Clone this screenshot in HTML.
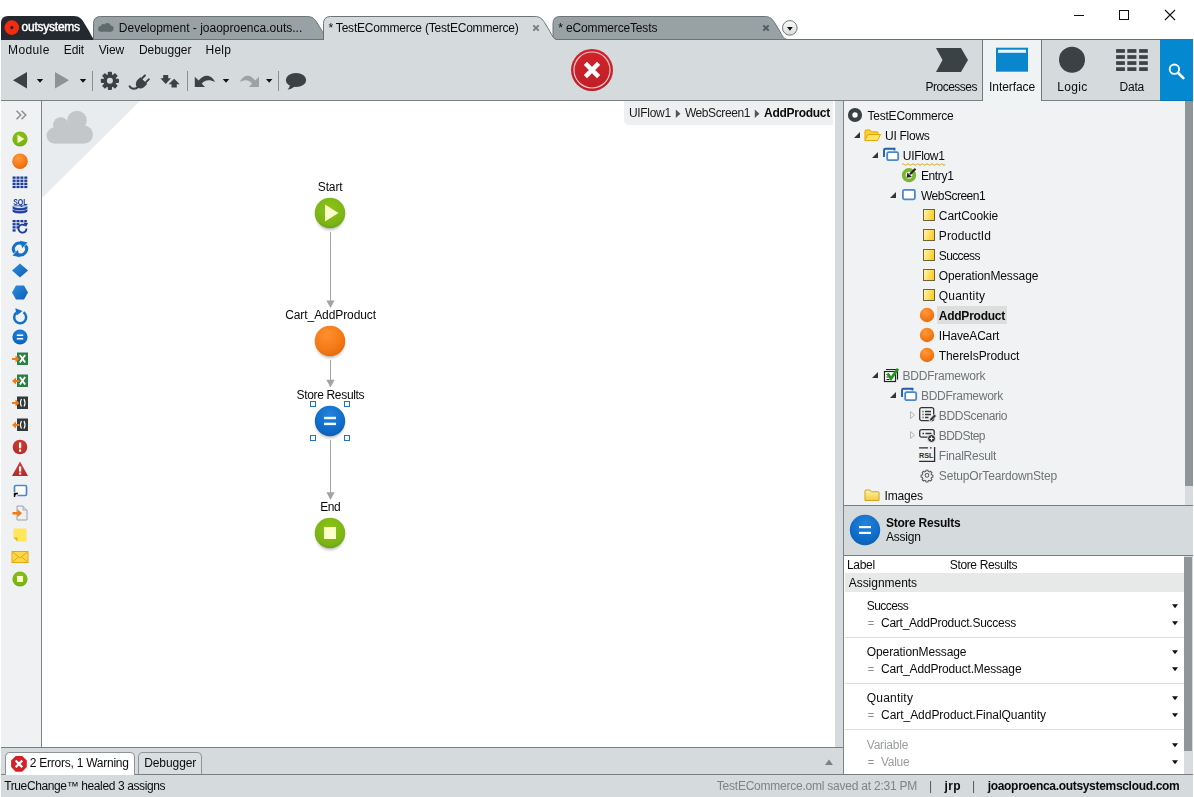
<!DOCTYPE html>
<html><head><meta charset="utf-8"><title>Service Studio</title>
<style>
html,body{margin:0;padding:0;background:#fff;}
#app{position:relative;width:1194px;height:797px;overflow:hidden;background:#fff;font-family:"Liberation Sans",sans-serif;font-size:12px;}
#app div,#app svg{position:absolute;}
.t{position:absolute;white-space:pre;line-height:16px;font-size:12px;}

</style></head>
<body>
<div id="app">
<!-- main chrome background -->
<div style="left:1px;top:40px;width:1192px;height:60px;background:#d5dadd;"></div>
<div style="left:1px;top:100px;width:1192px;height:1px;background:#7b8184;"></div>
<div style="left:1px;top:101px;width:1192px;height:696px;background:#d5dadd;"></div>
<!-- top tab strip -->
<svg style="left:0;top:0" width="1194" height="41" viewBox="0 0 1194 41">
  <defs><linearGradient id="ddg" x1="0" y1="0" x2="0" y2="1"><stop offset="0" stop-color="#fafafa"/><stop offset="1" stop-color="#d9dbdc"/></linearGradient></defs>
  <rect x="1" y="39" width="1192" height="1" fill="#676d70"/><rect x="1160" y="39" width="33" height="1" fill="#3f6f8d"/>
  <!-- tab 1 dark -->
  <path d="M1 40 V23 Q1 16 8 16 H73.700 C79.700 16 81.700 19 84 22.700 L89.300 31.400 C91.700 36 93 40 97 40 Z" fill="#23292e"/>
  <!-- tab 2 -->
  <path d="M93.5 39.5 V23.500 Q93.5 16.500 100.5 16.500 H306.7 C312.7 16.500 314.7 19 317.0 22.700 L322.3 31.400 C324.7 36 326.2 39.5 330.7 39.5 Z" fill="#98a2a5" stroke="#6b7376" stroke-width="1"/>
  <!-- tab 4 -->
  <path d="M553 39.5 V23.500 Q553 16.500 560 16.500 H764.3 C770.3 16.500 772.3 19 774.5999999999999 22.700 L779.9 31.400 C782.3 36 783.8 39.5 788.3 39.5 Z" fill="#98a2a5" stroke="#6b7376" stroke-width="1"/>
  <!-- tab 3 active -->
  <path d="M323.5 41 V23.500 Q323.5 16.500 330.5 16.500 H534.3 C540.3 16.500 542.3 19 544.6 22.700 L549.9 31.400 C552.3 36 553.8 40 558.3 40.2 V41 Z" fill="#d5dadd"/>
  <path d="M323.5 40 V23.500 Q323.5 16.500 330.5 16.500 H534.3 C540.3 16.500 542.3 19 544.6 22.700 L549.9 31.400 C552.3 36 553.8 39.500 557.5 39.500" fill="none" stroke="#6b7376" stroke-width="1"/>
  <!-- outsystems logo -->
  <circle cx="11.800" cy="27.600" r="4.500" fill="none" stroke="#f52b10" stroke-width="5.600"/>
  <!-- cloud in tab2 -->
  <g fill="#5f6b6c"><circle cx="101" cy="28.800" r="2.900"/><circle cx="103.200" cy="26.300" r="2.300"/><circle cx="107.400" cy="26" r="3.100"/><circle cx="110.500" cy="28.600" r="3.100"/><rect x="101" y="26.500" width="9.500" height="5.200"/></g>
  <!-- close x -->
  <path d="M533.300 25.300 l5.400 5.400 m0 -5.400 l-5.400 5.400" stroke="#777c7f" stroke-width="1.900" fill="none"/>
  <path d="M763.300 25.300 l5.400 5.400 m0 -5.400 l-5.400 5.400" stroke="#4f5a5e" stroke-width="1.900" fill="none"/>
  <!-- dropdown circle -->
  <circle cx="789.800" cy="27.900" r="7.300" fill="url(#ddg)" stroke="#6f7679" stroke-width="1"/>
  <path d="M787 27 h5.800 l-2.900 3.700z" fill="#111"/>
  <!-- window controls -->
  <rect x="1074" y="15" width="10" height="1" fill="#111"/>
  <rect x="1119.500" y="10.500" width="9" height="9" fill="none" stroke="#111" stroke-width="1"/>
  <path d="M1165 10 l10 10 m0 -10 l-10 10" stroke="#111" stroke-width="1.100" fill="none"/>
</svg>
<!-- toolbar icons -->
<svg style="left:0;top:60px" width="320" height="40" viewBox="0 60 320 40">
  <path d="M27 72 v16.500 l-14 -8.250z" fill="#3b4144"/>
  <path d="M36.800 78.900 h6.400 l-3.200 3.900z" fill="#111"/>
  <path d="M55 72 v16.500 l14 -8.250z" fill="#8d9295"/>
  <path d="M79.800 78.900 h6.400 l-3.200 3.900z" fill="#111"/>
  <rect x="92" y="71" width="1" height="20" fill="#8a8f92"/>
  <!-- gear -->
  <g transform="translate(109.900 80.800)" fill="#3b4144">
    <circle r="6.500"/>
    <rect x="-2.100" y="-9.100" width="4.200" height="18.200" rx="0.800"/><rect x="-2.100" y="-9.100" width="4.200" height="18.200" rx="0.800" transform="rotate(45)"/><rect x="-2.100" y="-9.100" width="4.200" height="18.200" rx="0.800" transform="rotate(90)"/><rect x="-2.100" y="-9.100" width="4.200" height="18.200" rx="0.800" transform="rotate(135)"/>
    <circle r="3" fill="#d5dadd"/>
  </g>
  <!-- plug -->
  <path d="M129.600 86.300 C131.500 89.600 136 89.400 138.500 86.500" stroke="#3b4144" stroke-width="2" fill="none" stroke-linecap="round"/>
  <g transform="translate(142 82.300) rotate(-45)" fill="#3b4144">
    <path d="M2.500 -4.800 V4.800 H-1 C-5 4.800 -7 2 -7 0 C-7 -2 -5 -4.800 -1 -4.800 Z"/>
    <rect x="2" y="-3.700" width="5.800" height="1.900" rx="0.600"/><rect x="2" y="1.800" width="5.800" height="1.900" rx="0.600"/>
  </g>
  <!-- down/up arrows -->
  <g fill="#3b4144">
    <path d="M163.200 75 h5 v3.300 h2.800 l-5.300 5.800 l-5.300 -5.800 h2.800z"/>
    <path d="M171.500 87.500 h5.300 v-3.300 h2.900 l-5.550 -5.500 l-5.550 5.500 h2.900z"/>
  </g>
  <rect x="187" y="71" width="1" height="20" fill="#8a8f92"/>
  <!-- undo -->
  <path d="M194.800 76.700 V87 H205 L201.800 83.800 C204 80.300 209 78.800 215 82 C212.500 75.500 204.500 72.500 198.600 80.500 Z" fill="#3b4144"/>
  <path d="M222.800 78.900 h6.400 l-3.200 3.900z" fill="#111"/>
  <!-- redo -->
  <path d="M259 76.700 V87 H248.800 L252 83.800 C250 80.300 245.500 78.800 240 82 C242.500 75.500 249.500 72.500 255.200 80.500 Z" fill="#9da2a5"/>
  <path d="M266 78.900 h6.400 l-3.200 3.900z" fill="#111"/>
  <rect x="278" y="71" width="1" height="20" fill="#8a8f92"/>
  <!-- speech bubble -->
  <ellipse cx="296" cy="80" rx="10.200" ry="7.100" fill="#3b4144"/>
  <path d="M290 84 c0 2.500 -1 4.200 -2.500 5.600 c3 -0.300 5.500 -1.500 7 -3.300z" fill="#3b4144"/>
</svg>
<!-- big red error -->
<svg style="left:568px;top:46px" width="48" height="48" viewBox="568 46 48 48">
  <defs><linearGradient id="rg" x1="0" y1="0" x2="0" y2="1"><stop offset="0" stop-color="#d2232b"/><stop offset="1" stop-color="#bf1e26"/></linearGradient></defs>
  <circle cx="592" cy="70" r="21" fill="url(#rg)"/>
  <circle cx="592" cy="70" r="18" fill="none" stroke="#f6c4c6" stroke-width="1.200"/>
  <path d="M585.400 63.400 l13.200 13.200 m0 -13.200 l-13.200 13.200" stroke="#fff" stroke-width="4.400" fill="none"/>
</svg>
<!-- right layer tabs -->
<div style="left:982px;top:40px;width:60px;height:61px;background:#f0f3f4;border-left:1px solid #74797c;border-right:1px solid #74797c;box-sizing:border-box;"></div>
<div style="left:1160px;top:40px;width:33px;height:61px;background:#0489d1;"></div><div style="left:1160px;top:100px;width:33px;height:1px;background:#0678b6;"></div>
<svg style="left:923px;top:39px" width="271" height="62" viewBox="923 39 271 62">
  <path d="M936 47.900 h25 l7 12 l-7 12 h-25 l6.500 -12z" fill="#3b4246"/>
  <rect x="996" y="47.700" width="32" height="24" fill="#0a86cf"/>
  <rect x="998" y="49.700" width="28" height="3.100" fill="#e3fbff"/>
  <circle cx="1072" cy="59.800" r="13" fill="#3b4246"/>
  <g fill="#3b4246"><rect x="1116.100" y="49.100" width="8.800" height="3.700"/><rect x="1127.300" y="49.100" width="9.100" height="3.700"/><rect x="1139.100" y="49.100" width="8.700" height="3.700"/><rect x="1116.100" y="55.150" width="8.800" height="3.700"/><rect x="1127.300" y="55.150" width="9.100" height="3.700"/><rect x="1139.100" y="55.150" width="8.700" height="3.700"/><rect x="1116.100" y="61.200" width="8.800" height="3.700"/><rect x="1127.300" y="61.200" width="9.100" height="3.700"/><rect x="1139.100" y="61.200" width="8.700" height="3.700"/><rect x="1116.100" y="67.250" width="8.800" height="3.700"/><rect x="1127.300" y="67.250" width="9.100" height="3.700"/><rect x="1139.100" y="67.250" width="8.700" height="3.700"/></g>
  <circle cx="1174.400" cy="69.200" r="4.700" fill="none" stroke="#fff" stroke-width="1.900"/>
  <path d="M1178.200 73 l5.200 5.200" stroke="#fff" stroke-width="2.600" stroke-linecap="round"/>
</svg>

<svg style="left:1px;top:101px;z-index:3" width="40" height="500" viewBox="1 101 40 500">
  <defs>
    <radialGradient id="lGreen" cx="0.5" cy="0.35" r="0.75"><stop offset="0" stop-color="#8cc21a"/><stop offset="0.7" stop-color="#7ab414"/><stop offset="1" stop-color="#5f9a10"/></radialGradient>
    <radialGradient id="lOrange" cx="0.4" cy="0.3" r="0.8"><stop offset="0" stop-color="#ff9a3c"/><stop offset="0.6" stop-color="#f47a16"/><stop offset="1" stop-color="#e0650a"/></radialGradient>
    <radialGradient id="lBlue" cx="0.5" cy="0.3" r="0.8"><stop offset="0" stop-color="#2483dc"/><stop offset="0.6" stop-color="#0f6cc9"/><stop offset="1" stop-color="#0a59ad"/></radialGradient>
    <linearGradient id="lBlue2" x1="0" y1="0" x2="1" y2="1"><stop offset="0" stop-color="#2f8ee0"/><stop offset="1" stop-color="#0f5db5"/></linearGradient>
    <radialGradient id="lRed" cx="0.5" cy="0.3" r="0.8"><stop offset="0" stop-color="#cf3b36"/><stop offset="1" stop-color="#b02a26"/></radialGradient>
  </defs>
  <!-- chevrons -->
  <path d="M16.500 110.700 l4.300 4.300 l-4.300 4.300 M21.500 110.700 l4.300 4.300 l-4.300 4.300" fill="none" stroke="#8a8f92" stroke-width="1.500"/>
  <!-- start -->
  <circle cx="20" cy="139" r="7.600" fill="url(#lGreen)"/><path d="M17.500 134.800 v8.400 l6.800 -4.200z" fill="#fbffc8"/>
  <!-- action -->
  <circle cx="20" cy="161.300" r="7.800" fill="url(#lOrange)"/>
  <!-- aggregate grid -->
  <g fill="#1b3b9e">
    <rect x="12.600" y="176.500" width="3" height="2.300"/><rect x="16.500" y="176.500" width="3" height="2.300"/><rect x="20.400" y="176.500" width="3" height="2.300"/><rect x="24.300" y="176.500" width="3" height="2.300"/>
    <rect x="12.600" y="179.600" width="3" height="2.300"/><rect x="16.500" y="179.600" width="3" height="2.300"/><rect x="20.400" y="179.600" width="3" height="2.300"/><rect x="24.300" y="179.600" width="3" height="2.300"/>
    <rect x="12.600" y="182.700" width="3" height="2.300"/><rect x="16.500" y="182.700" width="3" height="2.300"/><rect x="20.400" y="182.700" width="3" height="2.300"/><rect x="24.300" y="182.700" width="3" height="2.300"/>
    <rect x="12.600" y="185.800" width="3" height="2.300"/><rect x="16.500" y="185.800" width="3" height="2.300"/><rect x="20.400" y="185.800" width="3" height="2.300"/><rect x="24.300" y="185.800" width="3" height="2.300"/>
  </g>
  <!-- SQL -->
  <text x="13.200" y="204.600" font-family="Liberation Sans, sans-serif" font-size="9.800" font-weight="700" fill="#1b3b9e" textLength="14.400" lengthAdjust="spacingAndGlyphs">SQL</text>
  <path d="M13.500 205.800 h13 M13 206.600 c0 2.400 14 2.400 14 0 v1.600 c0 2.400 -14 2.400 -14 0z M13 209.600 c0 2.400 14 2.400 14 0 v1.600 c0 2.400 -14 2.400 -14 0z" fill="#1b3b9e" stroke="#1b3b9e" stroke-width="0.800"/>
  <!-- refresh data grid -->
  <g fill="#1b3b9e">
    <rect x="12.600" y="220" width="3" height="2.300"/><rect x="16.500" y="220" width="3" height="2.300"/><rect x="20.400" y="220" width="3" height="2.300"/><rect x="24.300" y="220" width="2.500" height="2.300"/>
    <rect x="12.600" y="223.100" width="3" height="2.300"/><rect x="16.500" y="223.100" width="3" height="2.300"/>
    <rect x="12.600" y="226.200" width="3" height="2.300"/><rect x="16.500" y="226.200" width="2" height="2.300"/>
    <rect x="12.600" y="229.300" width="3" height="2.300"/>
  </g>
  <path d="M26.500 228.500 a4 4 0 1 1 -1.500 -3" fill="none" stroke="#1b3b9e" stroke-width="1.800"/><path d="M23.500 222.500 l4.500 0.500 l-2 4z" fill="#1b3b9e"/>
  <!-- refresh -->
  <g fill="none" stroke="#1670c8" stroke-width="3"><path d="M14.600 252.500 a5.800 5.800 0 0 1 6.500 -9"/><path d="M25.400 245.500 a5.800 5.800 0 0 1 -6.500 9"/></g>
  <path d="M20 240.800 l7.500 1.700 l-5.300 5.500z M20 257.200 l-7.500 -1.700 l5.300 -5.500z" fill="#1670c8"/>
  <!-- if diamond -->
  <path d="M20 263.500 l8 7 l-8 7 l-8 -7z" fill="url(#lBlue2)"/>
  <!-- switch hexagon -->
  <path d="M12 292.500 l4 -7 h8 l4 7 l-4 7 h-8z" fill="url(#lBlue2)"/>
  <!-- for each -->
  <path d="M23.500 312.300 a6 6 0 1 1 -7.300 0.500" fill="none" stroke="#1670c8" stroke-width="2.500"/><path d="M15.300 308.300 l7.200 2.700 l-5.800 4.600z" fill="#1670c8"/>
  <!-- assign -->
  <circle cx="20" cy="337" r="7.600" fill="url(#lBlue)"/><rect x="16.800" y="334.500" width="6.400" height="1.500" fill="#fff"/><rect x="16.800" y="338" width="6.400" height="1.500" fill="#fff"/>
  <!-- excel in -->
  <rect x="17" y="352.500" width="11" height="12.500" fill="#2d7d46"/><path d="M19.800 355 l5.400 7.500 m0 -7.500 l-5.400 7.500" stroke="#fff" stroke-width="1.900"/>
  <path d="M12 358 h3.500 v-2.500 l4 3.500 l-4 3.500 v-2.500 h-3.500z" fill="#f47a16"/>
  <!-- excel out -->
  <rect x="17" y="374.500" width="11" height="12.500" fill="#2d7d46"/><path d="M19.800 377 l5.400 7.500 m0 -7.500 l-5.400 7.500" stroke="#fff" stroke-width="1.900"/>
  <path d="M19.500 380 h-3.500 v-2.500 l-4 3.500 l4 3.500 v-2.500 h3.500z" fill="#f47a16"/>
  <!-- json in -->
  <rect x="17" y="396.500" width="11" height="12.500" fill="#33383b"/><path d="M21.500 399 q-2 3.700 0 7.500 M24 399 q2 3.700 0 7.500" stroke="#fff" stroke-width="1.200" fill="none"/>
  <path d="M12 402 h3.500 v-2.500 l4 3.500 l-4 3.500 v-2.500 h-3.500z" fill="#f47a16"/>
  <!-- json out -->
  <rect x="17" y="418.500" width="11" height="12.500" fill="#33383b"/><path d="M21.500 421 q-2 3.700 0 7.500 M24 421 q2 3.700 0 7.500" stroke="#fff" stroke-width="1.200" fill="none"/>
  <path d="M19.500 424 h-3.500 v-2.500 l-4 3.500 l4 3.500 v-2.500 h3.500z" fill="#f47a16"/>
  <!-- raise exception -->
  <circle cx="20" cy="447" r="7.300" fill="url(#lRed)"/><rect x="19" y="442.500" width="2.200" height="5.800" fill="#fff"/><rect x="19" y="449.500" width="2.200" height="2.200" fill="#fff"/>
  <!-- exception handler -->
  <path d="M20 461.500 l8 14.500 h-16z" fill="url(#lRed)"/><rect x="19" y="466.500" width="2.200" height="5" fill="#fff"/><rect x="19" y="472.600" width="2.200" height="1.900" fill="#fff"/>
  <!-- destination -->
  <rect x="14.500" y="485.500" width="12" height="10" rx="1.300" fill="#fff" stroke="#4c86cf" stroke-width="1.700"/>
  <path d="M13 492 h4.500 v4.500 h-4.500z" fill="#eff1f2"/><path d="M14.500 497 v-3.500 h3.500 M14.500 493.500 l1.500 1.500" stroke="#111" stroke-width="1.400" fill="none"/>
  <!-- download -->
  <path d="M17 506 h6 l4 4 v10 h-10z" fill="#eef0f1" stroke="#9aa3ad" stroke-width="1"/><path d="M23 506 v4 h4" fill="#d5d9dd" stroke="#9aa3ad" stroke-width="0.800"/>
  <path d="M12.500 512 h5 v-2.800 l4.500 4 l-4.500 4 v-2.800 h-5z" fill="#f47a16"/>
  <!-- comment -->
  <path d="M13.500 528.500 h13 v13 h-9 l-4 -4z" fill="#ffe65a"/><path d="M13.500 537.500 h4 v4z" fill="#d9b620"/>
  <!-- send email -->
  <rect x="12" y="551.500" width="16" height="11" fill="#ffd84a" stroke="#e3a80c" stroke-width="1"/><path d="M12 551.500 l8 6.500 l8 -6.500 M12 562.500 l6 -5.500 M28 562.500 l-6 -5.500" fill="none" stroke="#e3a80c" stroke-width="1"/>
  <!-- end -->
  <circle cx="20" cy="579" r="7.600" fill="url(#lGreen)"/><rect x="17" y="576" width="6" height="6" fill="#fbffc8"/>
</svg>

<!-- left toolbar -->
<div style="left:1px;top:101px;width:40px;height:646px;background:#eff1f2;"></div>
<div style="left:41px;top:101px;width:1px;height:646px;background:#7d8386;"></div>
<!-- canvas -->
<div style="left:42px;top:101px;width:793px;height:646px;background:#fff;"></div>
<svg style="left:42px;top:101px" width="793" height="646" viewBox="42 101 793 646">
  <defs>
    <radialGradient id="gGreen" cx="0.5" cy="0.35" r="0.75"><stop offset="0" stop-color="#8cc21a"/><stop offset="0.7" stop-color="#7ab414"/><stop offset="1" stop-color="#5f9a10"/></radialGradient>
    <radialGradient id="gOrange" cx="0.4" cy="0.3" r="0.8"><stop offset="0" stop-color="#ff8f2e"/><stop offset="0.6" stop-color="#f47a16"/><stop offset="1" stop-color="#e0650a"/></radialGradient>
    <radialGradient id="gBlue" cx="0.5" cy="0.3" r="0.8"><stop offset="0" stop-color="#2483dc"/><stop offset="0.6" stop-color="#0f6cc9"/><stop offset="1" stop-color="#0a59ad"/></radialGradient>
    <filter id="sh" x="-30%" y="-30%" width="160%" height="170%"><feGaussianBlur stdDeviation="1.500"/></filter>
  </defs>
  <!-- corner triangle + cloud -->
  <path d="M42 101 H140 L42 198 Z" fill="#e9ecee"/>
  <g fill="#c3c7ca"><circle cx="54.600" cy="135.600" r="8"/><circle cx="60.700" cy="125" r="7.700"/><circle cx="77" cy="120.500" r="9.800"/><circle cx="84" cy="134.600" r="9"/><rect x="54.600" y="125" width="29.400" height="18.600"/></g>
  <!-- breadcrumb bg -->
  <path d="M624 101 H833 V125 H629 a5 5 0 0 1 -5 -5 Z" fill="#eeeff0"/>
  <path d="M675.800 109.500 v8.500 l4.600 -4.250z M754.800 109.500 v8.500 l4.600 -4.250z" fill="#555"/>
  <!-- connectors -->
  <g fill="#a3a3a3">
    <rect x="330" y="232" width="1" height="69"/><path d="M326.400 300.400 h8.200 l-4.100 7.700z"/>
    <rect x="330" y="360" width="1" height="20"/><path d="M326.400 379.700 h8.200 l-4.100 7.700z"/>
    <rect x="330" y="440" width="1" height="53"/><path d="M326.400 492.200 h8.200 l-4.100 7.700z"/>
  </g>
  <!-- nodes -->
  <ellipse cx="330" cy="216" rx="14" ry="14" fill="#000" opacity="0.250" filter="url(#sh)"/>
  <circle cx="330" cy="213" r="15.300" fill="url(#gGreen)"/>
  <path d="M325 204.500 v17 l13.500 -8.500z" fill="#fbffc8"/>
  <ellipse cx="330" cy="344" rx="14" ry="14" fill="#000" opacity="0.250" filter="url(#sh)"/>
  <circle cx="330" cy="341" r="15.300" fill="url(#gOrange)"/>
  <ellipse cx="330" cy="424" rx="14" ry="14" fill="#000" opacity="0.250" filter="url(#sh)"/>
  <circle cx="330" cy="421" r="15.200" fill="url(#gBlue)"/>
  <rect x="324" y="416.800" width="12" height="2.400" fill="#eefaff"/><rect x="324" y="422.700" width="12" height="2.400" fill="#eefaff"/>
  <g fill="#fff" stroke="#1b74c5" stroke-width="1">
    <rect x="310.500" y="401.500" width="5" height="5"/><rect x="344.500" y="401.500" width="5" height="5"/>
    <rect x="310.500" y="435.500" width="5" height="5"/><rect x="344.500" y="435.500" width="5" height="5"/>
  </g>
  <ellipse cx="330" cy="536" rx="14" ry="14" fill="#000" opacity="0.250" filter="url(#sh)"/>
  <circle cx="330" cy="533" r="15.300" fill="url(#gGreen)"/>
  <rect x="324" y="527" width="12" height="12" fill="#fbffc8"/>
</svg>
<!-- splitter between canvas and panel -->
<div style="left:835px;top:101px;width:8px;height:646px;background:#d5dadd;"></div>
<div style="left:843px;top:101px;width:1px;height:673px;background:#7d8386;"></div>

<!-- tree panel -->
<div style="left:844px;top:101px;width:341px;height:404px;background:#f0f2f3;"></div>
<div style="left:1185px;top:101px;width:8px;height:404px;background:#d8dcde;"></div>
<div style="left:1185px;top:101px;width:8px;height:385px;background:#8e9699;"></div>
<div style="left:937px;top:306px;width:70px;height:18px;background:#dcdddd;"></div>
<svg style="left:845px;top:101px" width="340" height="404" viewBox="845 101 340 404">
  <defs>
    <radialGradient id="tOrange" cx="0.4" cy="0.3" r="0.8"><stop offset="0" stop-color="#ff9a3c"/><stop offset="0.6" stop-color="#f47a16"/><stop offset="1" stop-color="#e0650a"/></radialGradient>
    <linearGradient id="tYel" x1="0" y1="0" x2="1" y2="0.3"><stop offset="0" stop-color="#fff6b4"/><stop offset="1" stop-color="#fbd02c"/></linearGradient>
    <g id="var"><rect x="0.500" y="0.500" width="11" height="11" fill="url(#tYel)" stroke="#6e6038" stroke-width="1"/></g>
    <linearGradient id="fold" x1="0" y1="0" x2="0" y2="1"><stop offset="0" stop-color="#fff3a6"/><stop offset="1" stop-color="#f5cd3a"/></linearGradient>
    <path id="exp" d="M6 0 V6 H0 Z" fill="#333"/>
    <path id="col" d="M0.500 0.500 L4.500 4 L0.500 7.500 Z" fill="#f0f2f3" stroke="#b5babd" stroke-width="1"/>
    <g id="flow"><path d="M1 9 V2.200 a1.400 1.400 0 0 1 1.400 -1.400 H11.500 V2.500" fill="none" stroke="#1f5fae" stroke-width="1.900"/><rect x="4.200" y="4.200" width="11" height="8" rx="1.500" fill="#fff" stroke="#4c86cf" stroke-width="1.800"/></g>
  </defs>
  <!-- module icon -->
  <circle cx="855" cy="115" r="4.900" fill="#fff" stroke="#3b4043" stroke-width="4.400"/>
  <!-- UI Flows -->
  <use href="#exp" x="854" y="132"/>
  <g transform="translate(864.500 129)">
    <path d="M0.500 11.500 V2 a1 1 0 0 1 1 -1 h4 l1.500 1.800 h5.500 a1 1 0 0 1 1 1 V5.500" fill="#fbd02f" stroke="#e6a700" stroke-width="1"/>
    <path d="M0.500 11.500 L3.300 5.500 H16 L13 11.500 Z" fill="#ffe36a" stroke="#e6a700" stroke-width="1"/>
  </g>
  <!-- UIFlow1 -->
  <use href="#exp" x="872" y="152"/>
  <use href="#flow" x="883" y="148"/>
  <path d="M902 164.500 q1.200 -1.600 2.400 0 t2.400 0 t2.400 0 t2.400 0 t2.400 0 t2.400 0 t2.400 0 t2.400 0 t2.400 0 t2.400 0 t2.400 0 t2.400 0 t2.400 0 t2.400 0 t2.400 0 t2.400 0 t2.400 0 t2.400 0" fill="none" stroke="#e0a800" stroke-width="1"/>
  <!-- Entry1 -->
  <g transform="translate(902 168)">
    <circle cx="7" cy="7.200" r="5.250" fill="#fff" stroke="#7db52e" stroke-width="3.800"/>
    <path d="M13.500 0.800 L8 6.300" stroke="#222" stroke-width="2"/>
    <path d="M4.600 9.700 L5.300 4.600 L10 9 Z" fill="#222"/>
  </g>
  <!-- WebScreen1 -->
  <use href="#exp" x="890" y="192"/>
  <rect x="902.900" y="189.900" width="12" height="9.400" rx="1.500" fill="#fff" stroke="#4c86cf" stroke-width="1.800"/>
  <!-- variables -->
  <use href="#var" x="923" y="209"/><use href="#var" x="923" y="229"/><use href="#var" x="923" y="249"/><use href="#var" x="923" y="269"/><use href="#var" x="923" y="289"/>
  <!-- actions -->
  <circle cx="927" cy="315" r="7.200" fill="url(#tOrange)"/><circle cx="927" cy="335" r="7.200" fill="url(#tOrange)"/><circle cx="927" cy="355" r="7.200" fill="url(#tOrange)"/>
  <!-- BDDFramework module -->
  <use href="#exp" x="872" y="372"/>
  <g transform="translate(883 368)">
    <rect x="1.500" y="3.500" width="11" height="10" fill="#fff" stroke="#222" stroke-width="1.200"/>
    <path d="M3 1.500 h11.500 v10" fill="none" stroke="#222" stroke-width="1.200"/>
    <path d="M3.500 6.500 h3 M3.500 9 h2 M3.500 11.500 h3" stroke="#222" stroke-width="1"/>
    <path d="M4.500 5.500 L8 10.500 L15 0.800" fill="none" stroke="#22951f" stroke-width="2.800"/>
  </g>
  <!-- BDDFramework flow -->
  <use href="#exp" x="890" y="392"/>
  <use href="#flow" x="901" y="388"/>
  <!-- BDDScenario -->
  <use href="#col" x="910" y="411"/>
  <g transform="translate(919 407)" fill="none" stroke="#333" stroke-width="1.300">
    <rect x="0.700" y="0.700" width="14" height="13" rx="2"/>
    <path d="M3.500 4.500 h1 M6 4.500 h6 M3.500 7.500 h1 M6 7.500 h6 M3.500 10.500 h1 M6 10.500 h3.500"/>
    <path d="M10 14.500 l1 -3 l4.500 -4.500 l2 2 l-4.500 4.500 z" fill="#333" stroke="#f0f2f3" stroke-width="0.800"/>
  </g>
  <!-- BDDStep -->
  <use href="#col" x="910" y="431"/>
  <g transform="translate(919 428)" fill="none" stroke="#333" stroke-width="1.300">
    <rect x="0.700" y="1.700" width="14.500" height="7.500" rx="2"/>
    <path d="M3.500 5.500 h1.500 M6.500 5.500 h6"/>
    <circle cx="12.500" cy="10.500" r="4" fill="#333" stroke="#f0f2f3" stroke-width="1"/>
    <path d="M10.500 10.500 h4 M12.500 8.500 v4" stroke="#fff" stroke-width="1.200"/>
  </g>
  <!-- FinalResult -->
  <g stroke="#2e2e2e" fill="none">
    <path d="M919.100 447.800 h9 M930 447.800 h1.600 M934.600 447 v14.400 M919.100 461.400 h16.100" stroke-width="1.300"/>
    <text x="919" y="457.900" font-family="Liberation Sans, sans-serif" font-size="6.800" font-weight="700" fill="#2e2e2e" stroke="none" textLength="14.500" lengthAdjust="spacingAndGlyphs">RSL</text>
  </g>
  <!-- SetupOrTeardownStep gear -->
  <g transform="translate(927 475.300) scale(0.780)" fill="none" stroke="#5a5f62" stroke-width="1.400">
    <path d="M-1.200 -6.500 h2.400 l0.400 1.600 l1.500 0.650 l1.400 -0.900 l1.700 1.700 l-0.900 1.400 l0.650 1.500 l1.600 0.400 v2.400 l-1.600 0.400 l-0.650 1.500 l0.900 1.400 l-1.700 1.700 l-1.400 -0.900 l-1.500 0.650 l-0.400 1.600 h-2.400 l-0.400 -1.600 l-1.500 -0.650 l-1.400 0.900 l-1.700 -1.700 l0.900 -1.400 l-0.650 -1.500 l-1.600 -0.400 v-2.400 l1.600 -0.400 l0.650 -1.500 l-0.900 -1.400 l1.700 -1.700 l1.400 0.900 l1.500 -0.650 z"/>
    <circle r="2.400"/>
  </g>
  <!-- Images folder -->
  <g transform="translate(864.500 489)">
    <path d="M0.500 11.500 V2 a1 1 0 0 1 1 -1 h4 l1.500 1.800 h6.500 a1 1 0 0 1 1 1 V11.500 Z" fill="url(#fold)" stroke="#caa32a" stroke-width="1"/>
  </g>
</svg>

<!-- property header -->
<div style="left:844px;top:505px;width:349px;height:1px;background:#777d80;"></div>
<div style="left:844px;top:506px;width:349px;height:49px;background:#d5dadc;"></div>
<div style="left:844px;top:555px;width:349px;height:1px;background:#777d80;"></div>
<div style="left:844px;top:556px;width:341px;height:219px;background:#fff;"></div>
<div style="left:845px;top:573px;width:339px;height:19px;background:#e7e8e8;"></div>
<div style="left:845px;top:637px;width:340px;height:1px;background:#dcdedf;"></div>
<div style="left:845px;top:683px;width:340px;height:1px;background:#dcdedf;"></div>
<div style="left:845px;top:729px;width:340px;height:1px;background:#dcdedf;"></div>
<div style="left:1184px;top:556px;width:9px;height:219px;background:#d8dcde;"></div>
<div style="left:1184px;top:557px;width:8px;height:194px;background:#8e9699;"></div>
<svg style="left:845px;top:506px" width="340" height="269" viewBox="845 506 340 269">
  <defs><radialGradient id="pBlue" cx="0.5" cy="0.3" r="0.8"><stop offset="0" stop-color="#2483dc"/><stop offset="0.6" stop-color="#0f6cc9"/><stop offset="1" stop-color="#0a59ad"/></radialGradient></defs>
  <circle cx="865" cy="530" r="15.200" fill="url(#pBlue)"/>
  <rect x="859" y="526" width="12" height="2.200" fill="#f2fbff"/><rect x="859" y="531.800" width="12" height="2.200" fill="#f2fbff"/>
  <g fill="#111">
    <path d="M1172 604.2 h6 l-3 4z"/><path d="M1172 621.2 h6 l-3 4z"/>
    <path d="M1172 650.2 h6 l-3 4z"/><path d="M1172 667.2 h6 l-3 4z"/>
    <path d="M1172 696.2 h6 l-3 4z"/><path d="M1172 713.2 h6 l-3 4z"/>
    <path d="M1172 743.2 h6 l-3 4z"/><path d="M1172 760.2 h6 l-3 4z"/>
  </g>
</svg>

<div style="left:1px;top:747px;width:842px;height:1px;background:#787e81;"></div>
<div style="left:1px;top:748px;width:842px;height:26px;background:#d5dadd;"></div>
<div style="left:1px;top:774px;width:1192px;height:1px;background:#787e81;"></div>
<div style="left:1px;top:775px;width:1192px;height:22px;background:#d5dadd;"></div>
<div style="left:5px;top:752px;width:130px;height:23px;background:#fff;border:1px solid #8e9497;border-bottom:none;border-radius:5px 5px 0 0;box-sizing:border-box;"></div>
<div style="left:138px;top:752px;width:64px;height:22px;background:#d9dee0;border:1px solid #8e9497;border-bottom:none;border-radius:5px 5px 0 0;box-sizing:border-box;"></div>
<svg style="left:8px;top:754px" width="22" height="20" viewBox="8 754 22 20">
  <path d="M15.700 756 h6.500 l4.600 4.600 v6.500 l-4.600 4.600 h-6.500 l-4.600 -4.600 v-6.500z" fill="#d42027"/>
  <path d="M15.600 760.500 l6.700 6.700 m0 -6.700 l-6.700 6.700" stroke="#fff" stroke-width="2.300"/>
</svg>
<svg style="left:820px;top:756px" width="16" height="12" viewBox="820 756 16 12"><path d="M825 765 h8 l-4 -5.500z" fill="#7d8285"/></svg>

<!-- text -->
<div id="txt" style="left:0;top:0;width:1194px;height:797px;will-change:transform;">
<span class="t" style="left:21.5px;top:19px;color:#ffffff;letter-spacing:-0.23px;-webkit-text-stroke:0.45px #fff;">outsystems</span>
<span class="t" style="left:118.8px;top:20px;color:#0c0c0c;">Development - joaoproenca.outs...</span>
<span class="t" style="left:328.5px;top:20px;color:#0c0c0c;letter-spacing:-0.21px;">* TestECommerce (TestECommerce)</span>
<span class="t" style="left:558.3px;top:20px;color:#0c0c0c;letter-spacing:-0.15px;">* eCommerceTests</span>
<span class="t" style="left:8.0px;top:42px;color:#0c0c0c;letter-spacing:0.39px;">Module</span>
<span class="t" style="left:63.8px;top:42px;color:#0c0c0c;letter-spacing:-0.12px;">Edit</span>
<span class="t" style="left:98.7px;top:42px;color:#0c0c0c;letter-spacing:-0.10px;">View</span>
<span class="t" style="left:138.9px;top:42px;color:#0c0c0c;letter-spacing:-0.01px;">Debugger</span>
<span class="t" style="left:205.5px;top:42px;color:#0c0c0c;letter-spacing:0.25px;">Help</span>
<span class="t" style="left:925.5px;top:79px;color:#0c0c0c;letter-spacing:-0.51px;">Processes</span>
<span class="t" style="left:989.1px;top:79px;color:#0c0c0c;letter-spacing:-0.07px;">Interface</span>
<span class="t" style="left:1057.3px;top:79px;color:#0c0c0c;letter-spacing:0.30px;">Logic</span>
<span class="t" style="left:1119.5px;top:79px;color:#0c0c0c;letter-spacing:-0.21px;">Data</span>
<span class="t" style="left:628.9px;top:105px;color:#1c1c1c;letter-spacing:-0.29px;">UIFlow1</span>
<span class="t" style="left:684.9px;top:105px;color:#1c1c1c;letter-spacing:-0.41px;">WebScreen1</span>
<span class="t" style="left:764.1px;top:105px;color:#0c0c0c;font-weight:700;letter-spacing:-0.29px;">AddProduct</span>
<span class="t" style="left:317.8px;top:179px;color:#0a0a0a;letter-spacing:-0.13px;">Start</span>
<span class="t" style="left:285.2px;top:307px;color:#0a0a0a;letter-spacing:-0.08px;">Cart_AddProduct</span>
<span class="t" style="left:296.5px;top:387px;color:#0a0a0a;letter-spacing:-0.33px;">Store Results</span>
<span class="t" style="left:320.3px;top:499px;color:#0a0a0a;letter-spacing:-0.49px;">End</span>
<span class="t" style="left:867.4px;top:108px;color:#0c0c0c;letter-spacing:-0.20px;">TestECommerce</span>
<span class="t" style="left:885.0px;top:128px;color:#0c0c0c;letter-spacing:-0.27px;">UI Flows</span>
<span class="t" style="left:902.8px;top:148px;color:#0c0c0c;letter-spacing:-0.33px;">UIFlow1</span>
<span class="t" style="left:920.9px;top:168px;color:#0c0c0c;letter-spacing:-0.35px;">Entry1</span>
<span class="t" style="left:920.9px;top:188px;color:#0c0c0c;letter-spacing:-0.49px;">WebScreen1</span>
<span class="t" style="left:938.8px;top:208px;color:#0c0c0c;letter-spacing:-0.06px;">CartCookie</span>
<span class="t" style="left:938.8px;top:228px;color:#0c0c0c;letter-spacing:0.10px;">ProductId</span>
<span class="t" style="left:938.8px;top:248px;color:#0c0c0c;letter-spacing:-0.62px;">Success</span>
<span class="t" style="left:938.8px;top:268px;color:#0c0c0c;letter-spacing:-0.12px;">OperationMessage</span>
<span class="t" style="left:938.8px;top:288px;color:#0c0c0c;letter-spacing:0.21px;">Quantity</span>
<span class="t" style="left:938.8px;top:308px;color:#0a0a0a;font-weight:700;letter-spacing:-0.25px;">AddProduct</span>
<span class="t" style="left:938.8px;top:328px;color:#0c0c0c;letter-spacing:-0.17px;">IHaveACart</span>
<span class="t" style="left:938.8px;top:348px;color:#0c0c0c;letter-spacing:-0.11px;">ThereIsProduct</span>
<span class="t" style="left:902.6px;top:368px;color:#6f7477;letter-spacing:-0.23px;">BDDFramework</span>
<span class="t" style="left:921.0px;top:388px;color:#6f7477;letter-spacing:-0.28px;">BDDFramework</span>
<span class="t" style="left:938.8px;top:408px;color:#6f7477;letter-spacing:-0.40px;">BDDScenario</span>
<span class="t" style="left:938.8px;top:428px;color:#6f7477;letter-spacing:-0.56px;">BDDStep</span>
<span class="t" style="left:938.8px;top:448px;color:#6f7477;letter-spacing:-0.25px;">FinalResult</span>
<span class="t" style="left:938.8px;top:468px;color:#6f7477;letter-spacing:-0.17px;">SetupOrTeardownStep</span>
<span class="t" style="left:884.5px;top:488px;color:#0c0c0c;letter-spacing:-0.16px;">Images</span>
<span class="t" style="left:885.9px;top:515px;color:#0a0a0a;font-weight:700;letter-spacing:-0.22px;">Store Results</span>
<span class="t" style="left:885.9px;top:529px;color:#0a0a0a;letter-spacing:-0.19px;">Assign</span>
<span class="t" style="left:847.0px;top:557px;color:#0c0c0c;letter-spacing:-0.33px;">Label</span>
<span class="t" style="left:949.8px;top:557px;color:#0c0c0c;letter-spacing:-0.36px;">Store Results</span>
<span class="t" style="left:848.7px;top:575px;color:#0c0c0c;letter-spacing:-0.03px;">Assignments</span>
<span class="t" style="left:866.8px;top:598px;color:#0c0c0c;letter-spacing:-0.58px;">Success</span>
<span class="t" style="left:867.8px;top:615px;color:#8a8f92;font-size:11px;">=</span>
<span class="t" style="left:881.0px;top:615px;color:#0c0c0c;letter-spacing:-0.25px;">Cart_AddProduct.Success</span>
<span class="t" style="left:866.8px;top:644px;color:#0c0c0c;letter-spacing:-0.11px;">OperationMessage</span>
<span class="t" style="left:867.8px;top:661px;color:#8a8f92;font-size:11px;">=</span>
<span class="t" style="left:881.0px;top:661px;color:#0c0c0c;letter-spacing:-0.16px;">Cart_AddProduct.Message</span>
<span class="t" style="left:866.8px;top:690px;color:#0c0c0c;letter-spacing:0.20px;">Quantity</span>
<span class="t" style="left:867.8px;top:707px;color:#8a8f92;font-size:11px;">=</span>
<span class="t" style="left:881.0px;top:707px;color:#0c0c0c;letter-spacing:-0.04px;">Cart_AddProduct.FinalQuantity</span>
<span class="t" style="left:866.8px;top:737px;color:#9a9ea1;letter-spacing:-0.23px;">Variable</span>
<span class="t" style="left:867.8px;top:754px;color:#8a8f92;font-size:11px;">=</span>
<span class="t" style="left:881.0px;top:754px;color:#9a9ea1;letter-spacing:-0.30px;">Value</span>
<span class="t" style="left:29.7px;top:755px;color:#0c0c0c;letter-spacing:-0.24px;">2 Errors, 1 Warning</span>
<span class="t" style="left:144.2px;top:755px;color:#0c0c0c;letter-spacing:-0.08px;">Debugger</span>
<span class="t" style="left:4.2px;top:778px;color:#0c0c0c;letter-spacing:-0.38px;">TrueChange™ healed 3 assigns</span>
<span class="t" style="left:716.8px;top:778px;color:#7f8487;letter-spacing:-0.23px;">TestECommerce.oml saved at 2:31 PM</span>
<span class="t" style="left:929.0px;top:778px;color:#555;">|</span>
<span class="t" style="left:944.5px;top:778px;color:#0a0a0a;font-weight:700;letter-spacing:0.32px;">jrp</span>
<span class="t" style="left:972.0px;top:778px;color:#555;">|</span>
<span class="t" style="left:987.7px;top:778px;color:#0a0a0a;font-weight:700;letter-spacing:-0.31px;">joaoproenca.outsystemscloud.com</span>
</div>
</div>
</body></html>
